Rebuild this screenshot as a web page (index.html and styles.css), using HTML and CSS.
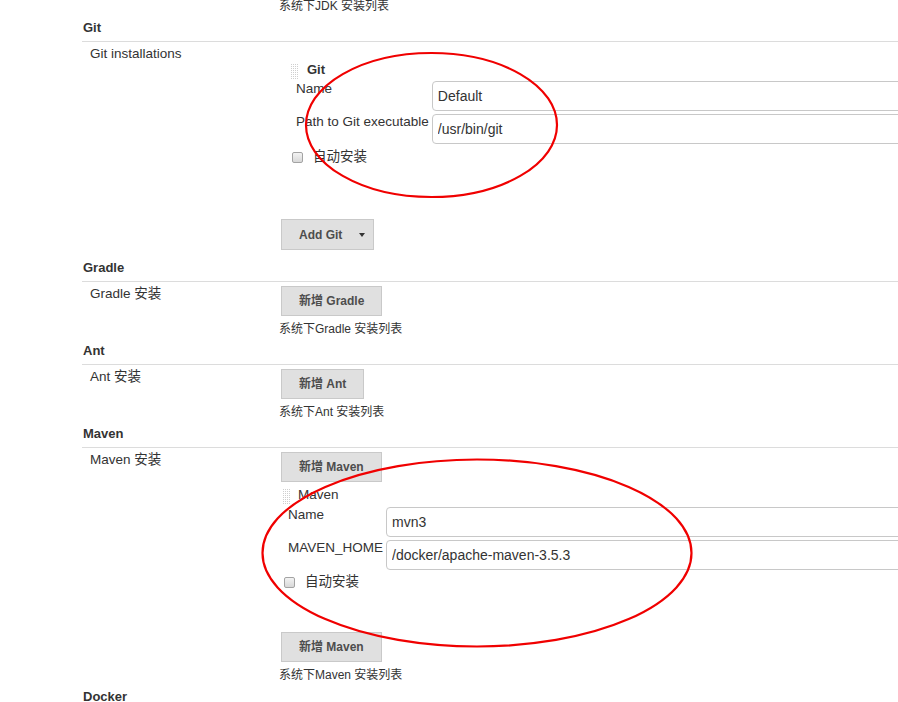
FILE: index.html
```html
<!DOCTYPE html>
<html lang="zh">
<head>
<meta charset="utf-8">
<title>全局工具配置</title>
<link rel="stylesheet" href="styles.css">
</head>
<body>
<div class="page">
  <div class="desc desc-first">系统下JDK 安装列表</div>

  <section class="section">
    <h3 class="section-title">Git</h3>
    <div class="row">
      <div class="row-label">Git installations</div>
      <div class="row-field">
        <div class="chunk chunk-git">
          <div class="chunk-head"><span class="grip"></span><span class="chunk-title chunk-title-bold">Git</span></div>
          <div class="entry-grid">
            <label class="entry-label">Name</label><input class="text-input" type="text" value="Default">
            <label class="entry-label">Path to Git executable</label><input class="text-input" type="text" value="/usr/bin/git">
          </div>
          <label class="check-row"><input type="checkbox" class="check"><span class="check-text">自动安装</span></label>
        </div>
        <button class="btn btn-add-git">Add Git<span class="caret"></span></button>
      </div>
    </div>
  </section>

  <section class="section">
    <h3 class="section-title">Gradle</h3>
    <div class="row">
      <div class="row-label">Gradle 安装</div>
      <div class="row-field">
        <button class="btn">新增 Gradle</button>
        <div class="desc">系统下Gradle 安装列表</div>
      </div>
    </div>
  </section>

  <section class="section">
    <h3 class="section-title">Ant</h3>
    <div class="row">
      <div class="row-label">Ant 安装</div>
      <div class="row-field">
        <button class="btn">新增 Ant</button>
        <div class="desc">系统下Ant 安装列表</div>
      </div>
    </div>
  </section>

  <section class="section">
    <h3 class="section-title">Maven</h3>
    <div class="row">
      <div class="row-label">Maven 安装</div>
      <div class="row-field">
        <button class="btn">新增 Maven</button>
        <div class="chunk chunk-maven">
          <div class="chunk-head"><span class="grip"></span><span class="chunk-title">Maven</span></div>
          <div class="entry-grid">
            <label class="entry-label">Name</label><input class="text-input" type="text" value="mvn3">
            <label class="entry-label">MAVEN_HOME</label><input class="text-input" type="text" value="/docker/apache-maven-3.5.3">
          </div>
          <label class="check-row"><input type="checkbox" class="check"><span class="check-text">自动安装</span></label>
        </div>
        <button class="btn btn-after-chunk">新增 Maven</button>
        <div class="desc">系统下Maven 安装列表</div>
      </div>
    </div>
  </section>

  <section class="section">
    <h3 class="section-title">Docker</h3>
  </section>
</div>

<svg class="marks" width="898" height="702" viewBox="0 0 898 702" aria-hidden="true">
  <ellipse cx="431.5" cy="125" rx="125.5" ry="72" fill="none" stroke="#f00000" stroke-width="2.2"/>
  <ellipse cx="477" cy="553" rx="214.5" ry="93.5" fill="none" stroke="#f00000" stroke-width="2.2"/>
</svg>
</body>
</html>
```

FILE: styles.css
```css
html, body {
  margin: 0;
  padding: 0;
  overflow: hidden;
  background: #fff;
}

body {
  font-family: "Liberation Sans", "Noto Sans CJK SC", sans-serif;
  color: #333;
  font-size: 13.5px;
}

.page {
  width: 1000px;
  margin-top: -2px;
  padding-left: 82px;
}

.desc {
  font-size: 12px;
  line-height: 16px;
  margin-top: 5px;
  color: #333;
}

.desc-first {
  margin-top: 0;
  padding-left: 197px;
}

.section-title {
  margin: 5px 0 0;
  padding: 0 0 4px 1px;
  font-size: 13px;
  line-height: 18px;
  font-weight: bold;
  border-bottom: 1px solid #dcdcdc;
}

.row {
  display: flex;
  padding-top: 3px;
}

.row-label {
  width: 189px;
  padding-left: 8px;
  line-height: 18px;
  flex: none;
}

.row-field {
  flex: 1;
  min-width: 0;
}

.btn {
  display: block;
  box-sizing: border-box;
  height: 30px;
  margin: 1px 0 0 2px;
  padding: 0 17px;
  background: #e0e0e0;
  border: 1px solid #c9c9c9;
  border-radius: 0;
  font-family: "Liberation Sans", "Noto Sans CJK SC", sans-serif;
  font-size: 12px;
  font-weight: bold;
  color: #4d4d4d;
  line-height: 28px;
}

.btn-add-git {
  height: 31px;
  margin-top: 53px;
  margin-bottom: 4px;
  padding: 0 8px 0 17px;
  display: flex;
  align-items: center;
}

.caret {
  display: inline-block;
  width: 0;
  height: 0;
  margin-left: 17px;
  border-top: 4px solid #333;
  border-left: 3.5px solid transparent;
  border-right: 3.5px solid transparent;
}

.btn-after-chunk {
  margin-top: 41px;
}

.chunk-git {
  margin: 16px 0 0 11px;
}

.chunk-maven {
  margin: 4px 0 0 3px;
}

.chunk-head {
  display: flex;
  align-items: flex-start;
  height: 18px;
  line-height: 18px;
}

.grip {
  flex: none;
  width: 8px;
  height: 17px;
  margin-top: 2px;
  background-color: #fff;
  background-image:
    linear-gradient(90deg, #fff 1px, transparent 1px),
    linear-gradient(#fff 1px, #cfcfcf 1px);
  background-size: 2px 2px;
}

.chunk-title {
  margin-left: 8px;
  font-size: 13.5px;
}

.chunk-title-bold {
  margin-left: 9px;
  font-size: 13px;
  font-weight: bold;
}

.entry-grid {
  display: grid;
  grid-template-columns: max-content 1fr;
  row-gap: 3px;
  margin-top: 2px;
  padding-left: 6px;
}

.chunk-maven .entry-grid {
  margin-top: 3px;
}

.entry-label {
  line-height: 15px;
  padding-right: 3px;
}

.text-input {
  box-sizing: border-box;
  height: 30px;
  width: 100%;
  margin: 0;
  padding: 0 5px;
  border: 1px solid #c8c8c8;
  border-radius: 4px;
  font-family: "Liberation Sans", "Noto Sans CJK SC", sans-serif;
  font-size: 14px;
  color: #333;
  background: #fff;
}

.check-row {
  display: flex;
  align-items: center;
  height: 18px;
  margin-top: 3px;
  line-height: 18px;
}

.chunk-git .check-row {
  margin-top: 4px;
}

.check {
  -webkit-appearance: none;
  appearance: none;
  box-sizing: border-box;
  width: 11px;
  height: 11px;
  margin: 0 10px 0 2px;
  border: 1px solid #a3a3a3;
  border-radius: 2px;
  background: linear-gradient(#f3f3f3, #d8d8d8);
}

.marks {
  position: absolute;
  top: 0;
  left: 0;
  pointer-events: none;
}
```
